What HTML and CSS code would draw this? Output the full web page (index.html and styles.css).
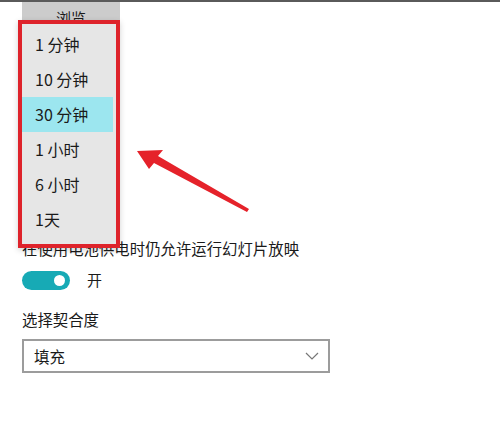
FILE: index.html
```html
<!DOCTYPE html>
<html lang="zh-CN">
<head>
  <meta charset="UTF-8">
  <meta name="viewport" content="width=device-width, initial-scale=1.0">
  <title>幻灯片放映设置</title>
  <link rel="stylesheet" href="styles.css">
</head>
<body>
  <div class="top-line"></div>

  <main class="page">
    <button class="browse">浏览</button>

    <!-- 电池供电时的放映 -->
    <section class="setting">
      <p class="label battery-label">在使用电池供电时仍允许运行幻灯片放映</p>
      <div class="toggle-row">
        <span class="toggle"><span class="knob"></span></span>
        <span class="toggle-text">开</span>
      </div>
    </section>

    <!-- 契合度 -->
    <section class="setting">
      <p class="label fit-label">选择契合度</p>
      <div class="select">
        <span>填充</span>
        <svg class="chevron" width="14" height="8" viewBox="0 0 14 8">
          <path d="M1 1 L7 7 L13 1" fill="none" stroke="#777" stroke-width="1.2"/>
        </svg>
      </div>
    </section>
  </main>

  <!-- 弹出的时间菜单 -->
  <ul class="menu">
    <li>1 分钟</li>
    <li>10 分钟</li>
    <li class="selected">30 分钟</li>
    <li>1 小时</li>
    <li>6 小时</li>
    <li>1天</li>
  </ul>

  <!-- 标注箭头 -->
  <svg class="arrow" width="500" height="440" viewBox="0 0 500 440">
    <polygon points="137,151 163,150 158,156 249,209 247,212 154,163 149,169" fill="#e5222a"/>
  </svg>
</body>
</html>
```

FILE: styles.css
```css
/* Основа страницы */
body {
  margin: 0;
  background: #fff;
  font-family: "Noto Sans CJK SC", "Noto Sans", sans-serif;
  color: #1a1a1a;
  position: relative;
  width: 500px;
  height: 440px;
  overflow: hidden;
}

.top-line {
  height: 2px;
  background: #5a5a5a;
}

.page {
  padding: 0 22px;
  display: flex;
  flex-direction: column;
  align-items: flex-start;
}

/* Кнопка обзора */
.browse {
  width: 98px;
  height: 28px;
  border: none;
  background: #cccccc;
  font-family: inherit;
  font-size: 15px;
  color: #1a1a1a;
  padding: 2px 0 0;
}

.setting {
  display: flex;
  flex-direction: column;
  align-items: flex-start;
}

.label {
  margin: 0;
  font-size: 15.4px;
  line-height: 20px;
}

.battery-label {
  margin-top: 208px;
}

.fit-label {
  margin-top: 19px;
}

/* Переключатель */
.toggle-row {
  display: flex;
  align-items: center;
  gap: 17px;
  margin-top: 12px;
  height: 20px;
}

.toggle {
  width: 48px;
  height: 19px;
  border-radius: 10px;
  background: #17aab5;
  display: flex;
  align-items: center;
  justify-content: flex-end;
  padding-right: 5px;
  box-sizing: border-box;
}

.knob {
  width: 11px;
  height: 11px;
  border-radius: 50%;
  background: #fff;
}

.toggle-text {
  font-size: 15px;
  line-height: 20px;
}

/* Выпадающий список */
.select {
  margin-top: 10px;
  width: 308px;
  height: 34px;
  border: 2px solid #9c9c9c;
  box-sizing: border-box;
  display: flex;
  align-items: center;
  justify-content: space-between;
  padding: 0 9px 0 10px;
  font-size: 15.5px;
}

/* Меню поверх контента */
.menu {
  position: absolute;
  left: 18px;
  top: 20px;
  width: 91px;
  margin: 0;
  padding: 3px 3px 7px 0;
  list-style: none;
  background: #e6e6e6;
  border: 4px solid #de232b;
  box-shadow: 0 2px 6px rgba(0, 0, 0, 0.18);
}

.menu li {
  height: 35px;
  line-height: 35px;
  padding-left: 13px;
  font-size: 16px;
  color: #1a1a1a;
}

.menu li.selected {
  background: #9ce6ef;
}

.arrow {
  position: absolute;
  left: 0;
  top: 0;
}
```
